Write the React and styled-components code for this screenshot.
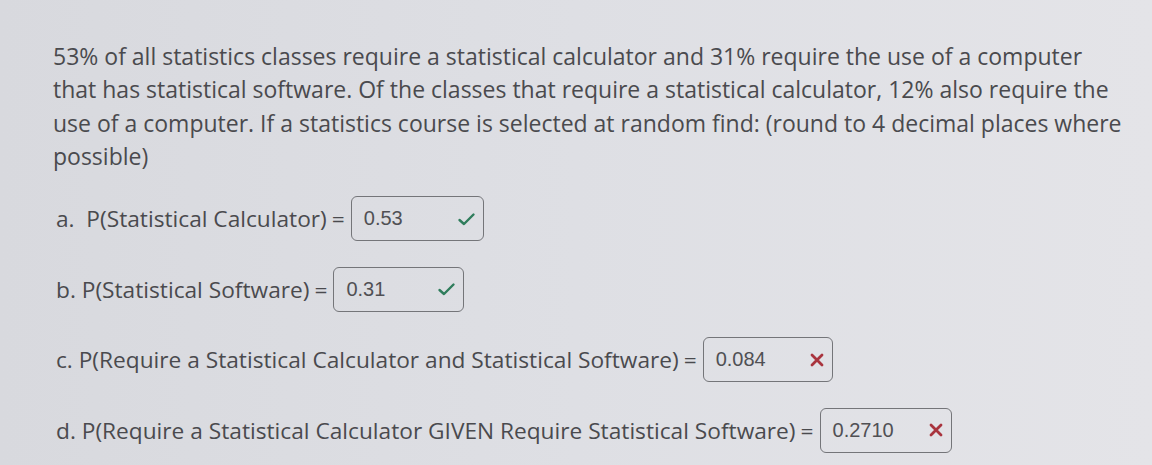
import React from "react";
import styled, { createGlobalStyle } from "styled-components";

const Global = createGlobalStyle`
  html, body { margin: 0; padding: 0; background: #dfdfe4; }
  body { font-family: "Open Sans", "Noto Sans", sans-serif; }
`;

const Page = styled.div`
  width: 1152px;
  height: 465px;
  box-sizing: border-box;
  padding: 40px 20px 0 53px;
  background: linear-gradient(90deg, #d8d9de 0%, #dedfe4 50%, #e4e4e8 100%);
  color: #4a4a4e;
  overflow: hidden;
`;

const Question = styled.p`
  margin: 0;
  font-size: 23px;
  line-height: 33.3px;
  white-space: nowrap;
`;

const Parts = styled.div`
  display: flex;
  flex-direction: column;
  gap: 25.5px;
  margin-top: 23px;
  padding-left: 3px;
`;

const Row = styled.div`
  display: flex;
  align-items: center;
  height: 45px;
  font-size: 22.7px;
`;

const Label = styled.span`
  white-space: pre;
`;

const Eq = styled.span`
  margin: 0 6px 0 5px;
`;

const Field = styled.div`
  display: flex;
  align-items: center;
  justify-content: space-between;
  box-sizing: border-box;
  width: ${(p) => p.$w}px;
  height: 45px;
  padding: 0 7px 0 12px;
  border: 1.6px solid #747579;
  border-radius: 6px;
  font-family: "Liberation Sans", Arial, sans-serif;
  font-size: 20px;
  color: #505054;
`;

const Check = () => (
  <svg width="19" height="16" viewBox="0 0 19 16">
    <path d="M2.5 9 L7 13 L16.5 3.5" fill="none" stroke="#2f7d5c" strokeWidth="2.4" strokeLinecap="round" strokeLinejoin="round" />
  </svg>
);

const Cross = () => (
  <svg width="16" height="16" viewBox="0 0 16 16">
    <path d="M3 3 L13 13 M13 3 L3 13" fill="none" stroke="#a9343e" strokeWidth="2.8" strokeLinecap="round" />
  </svg>
);

const rows = [
  { label: "a.  P(Statistical Calculator)", value: "0.53", ok: true, w: 133 },
  { label: "b. P(Statistical Software)", value: "0.31", ok: true, w: 131 },
  { label: "c. P(Require a Statistical Calculator and Statistical Software)", value: "0.084", ok: false, w: 130 },
  { label: "d. P(Require a Statistical Calculator GIVEN Require Statistical Software)", value: "0.2710", ok: false, w: 132 },
];

export default function App() {
  return (
    <>
      <Global />
      <Page>
        <Question>
          53% of all statistics classes require a statistical calculator and 31% require the use of a computer
          <br />
          that has statistical software. Of the classes that require a statistical calculator, 12% also require the
          <br />
          use of a computer. If a statistics course is selected at random find: (round to 4 decimal places where
          <br />
          possible)
        </Question>
        <Parts>
          {rows.map((r) => (
            <Row key={r.label}>
              <Label>{r.label}</Label>
              <Eq>=</Eq>
              <Field $w={r.w}>
                <span>{r.value}</span>
                {r.ok ? <Check /> : <Cross />}
              </Field>
            </Row>
          ))}
        </Parts>
      </Page>
    </>
  );
}
